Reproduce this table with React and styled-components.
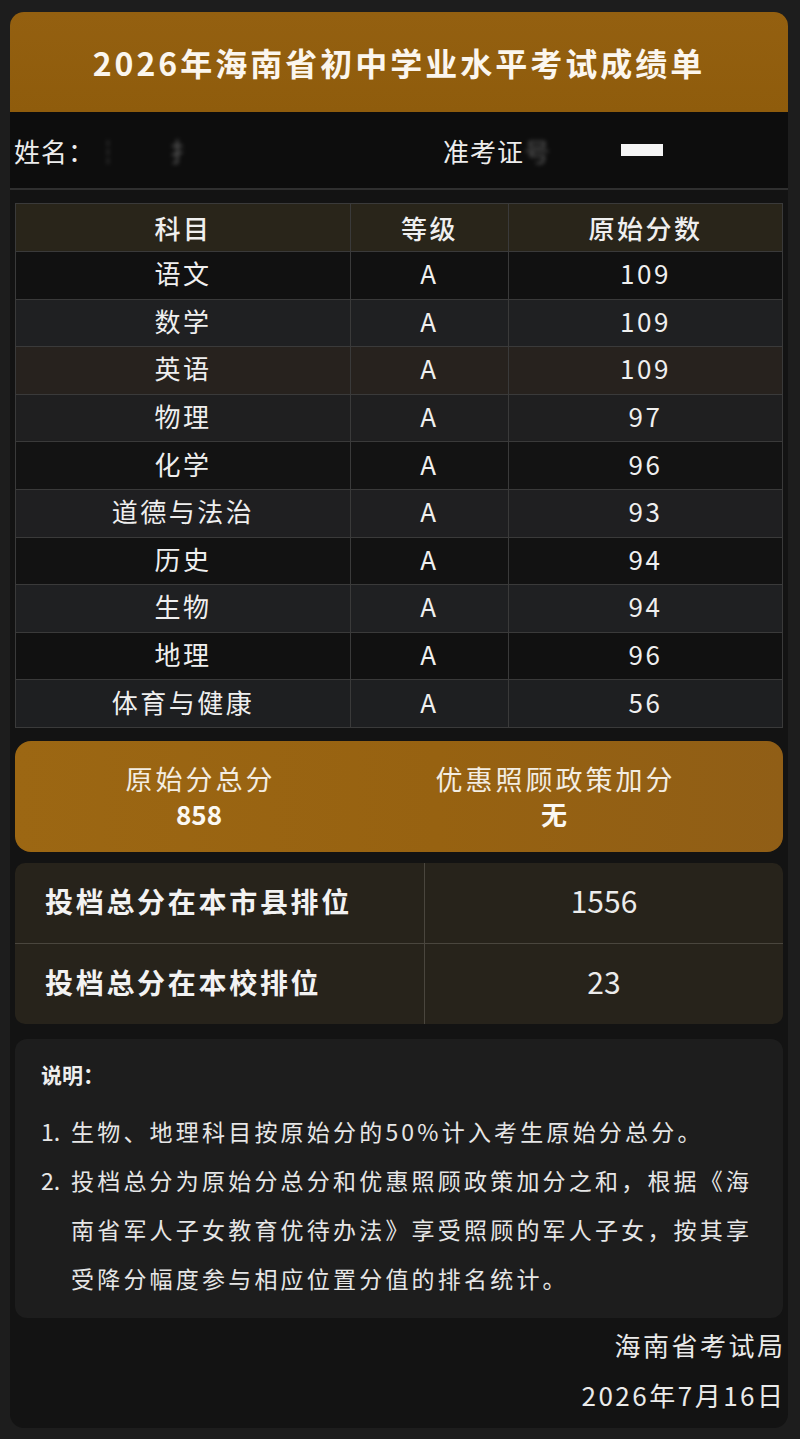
import React from 'react';
import styled, { createGlobalStyle } from 'styled-components';

const GlobalStyle = createGlobalStyle`
  body {
    margin: 0;
    background-color: #1d1d1d;
    font-family: 'Noto Sans CJK SC', 'Noto Sans', sans-serif;
    color: #ededed;
  }
`;

const Card = styled.div`
  width: 778px;
  margin: 12px 12px 0 10px;
  background-color: #131313;
  border-radius: 14px;
  overflow: hidden;
  padding-bottom: 8px;
`;

const Header = styled.div`
  height: 100px;
  display: flex;
  align-items: center;
  justify-content: center;
  background: linear-gradient(180deg, #946010 0%, #8f5c0c 100%);
`;

const Title = styled.h1`
  margin: 0;
  font-size: 32px;
  font-weight: 700;
  letter-spacing: 3px;
  color: #fbf6ee;
`;

const InfoRow = styled.div`
  height: 76px;
  display: flex;
  align-items: center;
  padding-left: 4px;
  background-color: #0d0d0d;
  border-bottom: 2px solid #2f2f2f;
  font-size: 26px;
  letter-spacing: 1px;
`;

const InfoField = styled.div`
  width: ${p => p.$width || 'auto'};
  display: flex;
  align-items: center;
`;

const Blur = styled.span`
  color: #888;
  filter: blur(2px);
  opacity: 0.6;
`;

const Redact = styled.span`
  display: inline-block;
  width: 42px;
  height: 12px;
  margin-left: 70px;
  background-color: #f4f4f4;
`;

const Body = styled.div`
  padding: 13px 5px 0 5px;
  display: flex;
  flex-direction: column;
`;

const Table = styled.div`
  border: 1.5px solid #3a3a3a;
  border-bottom: none;
`;

const Row = styled.div`
  display: grid;
  grid-template-columns: 334px 158px 1fr;
  height: ${p => (p.$head ? '48px' : '47.6px')};
  box-sizing: border-box;
  border-bottom: 1.5px solid #3a3a3a;
  background-color: ${p => p.$bg};
`;

const Cell = styled.div`
  display: flex;
  align-items: center;
  justify-content: center;
  padding-bottom: ${p => (p.$head ? '1px' : '5px')};
  font-size: 26px;
  font-weight: ${p => (p.$head ? 500 : 400)};
  letter-spacing: 2.5px;
  color: #efefef;
  & + & {
    border-left: 1.5px solid #3a3a3a;
  }
`;

const Summary = styled.div`
  margin-top: 13px;
  height: 111px;
  border-radius: 16px;
  display: grid;
  grid-template-columns: 368px 342px;
  align-items: center;
  background: linear-gradient(90deg, #9c6713 0%, #976211 55%, #905e16 100%);
`;

const SummaryItem = styled.div`
  display: flex;
  flex-direction: column;
  align-items: center;
  line-height: 35px;
`;

const SummaryLabel = styled.div`
  font-size: 27px;
  letter-spacing: 3px;
  margin-right: -3px;
  color: #f3ede2;
`;

const SummaryValue = styled.div`
  font-size: 26px;
  font-weight: 700;
  color: #fbf8f2;
`;

const Ranking = styled.div`
  margin-top: 11px;
  border-radius: 10px;
  overflow: hidden;
  background-color: #27231b;
`;

const RankRow = styled.div`
  display: grid;
  grid-template-columns: 410px 1fr;
  height: 80px;
  & + & {
    border-top: 1.5px solid #4a463e;
  }
`;

const RankLabel = styled.div`
  display: flex;
  align-items: center;
  padding: 0 0 3px 30px;
  font-size: 28px;
  font-weight: 700;
  letter-spacing: 2.7px;
  color: #f2f2f2;
  border-right: 1.5px solid #4a463e;
`;

const RankValue = styled.div`
  display: flex;
  align-items: center;
  justify-content: center;
  padding-bottom: 5px;
  font-size: 30px;
  color: #ececec;
`;

const Notes = styled.div`
  margin-top: 15px;
  height: 279px;
  box-sizing: border-box;
  padding: 17px 23px 0 26px;
  border-radius: 12px;
  background-color: #1d1d1d;
`;

const NotesTitle = styled.div`
  font-size: 21px;
  font-weight: 700;
  line-height: 36px;
  color: #eeeeee;
  margin-bottom: 15px;
`;

const NoteList = styled.ol`
  margin: 0;
  padding: 0;
  list-style: none;
`;

const NoteItem = styled.li`
  display: flex;
  font-size: 23px;
  line-height: 49px;
  letter-spacing: 3.2px;
  color: #e6e6e6;
`;

const NoteNum = styled.span`
  flex: 0 0 30px;
  letter-spacing: 0;
`;

const NoteText = styled.span`
  width: 692px;
`;

const Footer = styled.div`
  display: flex;
  flex-direction: column;
  align-items: flex-end;
  padding: 2px 0 0 0;
  margin-right: -2.5px;
  font-size: 26px;
  line-height: 50px;
  letter-spacing: 2.5px;
  color: #eaeaea;
`;

const subjects = [
  { name: '语文', grade: 'A', score: 109, bg: '#111111' },
  { name: '数学', grade: 'A', score: 109, bg: '#1f2022' },
  { name: '英语', grade: 'A', score: 109, bg: '#27221e' },
  { name: '物理', grade: 'A', score: 97, bg: '#1f1f20' },
  { name: '化学', grade: 'A', score: 96, bg: '#131313' },
  { name: '道德与法治', grade: 'A', score: 93, bg: '#1f1f21' },
  { name: '历史', grade: 'A', score: 94, bg: '#121212' },
  { name: '生物', grade: 'A', score: 94, bg: '#1f2022' },
  { name: '地理', grade: 'A', score: 96, bg: '#111111' },
  { name: '体育与健康', grade: 'A', score: 56, bg: '#1e1f21' },
];

const App = () => {
  return (
    <>
      <GlobalStyle />
      <Card>
        <Header>
          <Title>2026年海南省初中学业水平考试成绩单</Title>
        </Header>
        <InfoRow>
          <InfoField $width="429px">
            姓名：<Blur>┆&nbsp;&nbsp;&nbsp;&nbsp;&nbsp;&nbsp;&nbsp;扌</Blur>
          </InfoField>
          <InfoField>
            准考证<Blur>号</Blur>
            <Redact />
          </InfoField>
        </InfoRow>
        <Body>
          <Table>
            <Row $head $bg="#29251a">
              <Cell $head>科目</Cell>
              <Cell $head>等级</Cell>
              <Cell $head>原始分数</Cell>
            </Row>
            {subjects.map(s => (
              <Row key={s.name} $bg={s.bg}>
                <Cell>{s.name}</Cell>
                <Cell>{s.grade}</Cell>
                <Cell>{s.score}</Cell>
              </Row>
            ))}
          </Table>

          <Summary>
            <SummaryItem>
              <SummaryLabel>原始分总分</SummaryLabel>
              <SummaryValue>858</SummaryValue>
            </SummaryItem>
            <SummaryItem>
              <SummaryLabel>优惠照顾政策加分</SummaryLabel>
              <SummaryValue>无</SummaryValue>
            </SummaryItem>
          </Summary>

          <Ranking>
            <RankRow>
              <RankLabel>投档总分在本市县排位</RankLabel>
              <RankValue>1556</RankValue>
            </RankRow>
            <RankRow>
              <RankLabel>投档总分在本校排位</RankLabel>
              <RankValue>23</RankValue>
            </RankRow>
          </Ranking>

          <Notes>
            <NotesTitle>说明：</NotesTitle>
            <NoteList>
              <NoteItem>
                <NoteNum>1.</NoteNum>
                <NoteText>生物、地理科目按原始分的50%计入考生原始分总分。</NoteText>
              </NoteItem>
              <NoteItem>
                <NoteNum>2.</NoteNum>
                <NoteText>
                  投档总分为原始分总分和优惠照顾政策加分之和，根据《海南省军人子女教育优待办法》享受照顾的军人子女，按其享受降分幅度参与相应位置分值的排名统计。
                </NoteText>
              </NoteItem>
            </NoteList>
          </Notes>

          <Footer>
            <div>海南省考试局</div>
            <div>2026年7月16日</div>
          </Footer>
        </Body>
      </Card>
    </>
  );
};

export default App;
